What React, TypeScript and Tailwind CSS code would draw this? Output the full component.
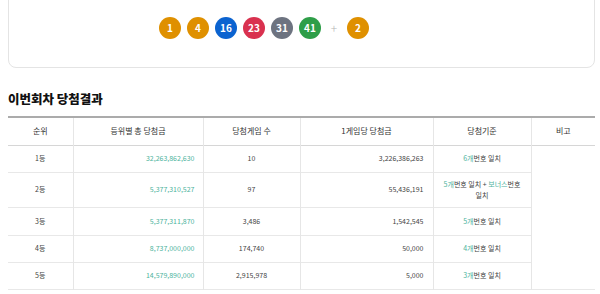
import React from 'react';

const balls = [
    { n: 1, c: 'bg-[#df9000]' },
    { n: 4, c: 'bg-[#df9000]' },
    { n: 16, c: 'bg-[#0b63d0]' },
    { n: 23, c: 'bg-[#d9314f]' },
    { n: 31, c: 'bg-[#6d7380]' },
    { n: 41, c: 'bg-[#2e9e48]' },
];

const rows = [
    { rank: '1등', total: '32,263,862,630', count: '10', per: '3,226,386,263', match: '6개', h: 'h-[27px]' },
    { rank: '2등', total: '5,377,310,527', count: '97', per: '55,436,191', match: '5개', bonus: true, h: 'h-[35px]' },
    { rank: '3등', total: '5,377,311,870', count: '3,486', per: '1,542,545', match: '5개', h: 'h-[28px]' },
    { rank: '4등', total: '8,737,000,000', count: '174,740', per: '50,000', match: '4개', h: 'h-[27px]' },
    { rank: '5등', total: '14,579,890,000', count: '2,915,978', per: '5,000', match: '3개', h: 'h-[27px]' },
];

const Ball = ({ n, c }: { n: number; c: string }) => (
    <div className={`w-[22px] h-[22px] rounded-full ${c} flex items-center justify-center text-white text-[10px] font-bold`}>
        {n}
    </div>
);

export default function App() {
    return (
        <div className="w-[600px] h-[294px] overflow-hidden bg-white pl-2 pr-[5px] font-['Noto_Sans_CJK_KR','Noto_Sans',sans-serif] text-[#444]">
            {/* winning numbers card (top cut off) */}
            <div className="-mt-[13px] h-[81px] border border-[#e4e4e4] rounded-lg flex items-center pl-[150px] gap-[6px]">
                {balls.map((b) => (
                    <Ball key={b.n} n={b.n} c={b.c} />
                ))}
                <div className="w-[14px] text-center text-[12px] font-light text-[#b5b5b5] leading-none">+</div>
                <Ball n={2} c="bg-[#df9000]" />
            </div>

            <h2 className="mt-[21px] text-[12.5px] leading-[20px] font-extrabold text-[#111]">이번회차 당첨결과</h2>

            <table className="mt-[7px] w-[587px] table-fixed border-collapse border-t-2 border-[#ababab] text-[7px]">
                <colgroup>
                    <col className="w-[65px]" />
                    <col className="w-[130px]" />
                    <col className="w-[97px]" />
                    <col className="w-[133px]" />
                    <col className="w-[98px]" />
                    <col className="w-[64px]" />
                </colgroup>
                <thead>
                    <tr className="h-[28px] border-b border-[#d6d6d6] text-[8px] text-[#333]">
                        <th className="font-normal">순위</th>
                        <th className="font-normal border-l border-[#e6e6e6]">등위별 총 당첨금</th>
                        <th className="font-normal border-l border-[#e6e6e6]">당첨게임 수</th>
                        <th className="font-normal border-l border-[#e6e6e6]">1게임당 당첨금</th>
                        <th className="font-normal border-l border-[#e6e6e6]">당첨기준</th>
                        <th className="font-normal border-l border-[#e6e6e6]">비고</th>
                    </tr>
                </thead>
                <tbody>
                    {rows.map((r, i) => (
                        <tr key={r.rank} className={`${r.h} border-b border-[#e8e8e8]`}>
                            <td className="text-center">{r.rank}</td>
                            <td className="text-right pr-2 text-[#4db39d] border-l border-[#e6e6e6]">{r.total}</td>
                            <td className="text-center border-l border-[#e6e6e6]">{r.count}</td>
                            <td className="text-right pr-[9px] border-l border-[#e6e6e6]">{r.per}</td>
                            <td className="text-center leading-[11px] border-l border-[#e6e6e6]">
                                <span className="text-[#4db39d]">{r.match}</span>번호 일치
                                {r.bonus && (
                                    <>
                                        {' + '}
                                        <span className="text-[#4db39d]">보너스</span>번호
                                        <br />
                                        일치
                                    </>
                                )}
                            </td>
                            {i === 0 && <td rowSpan={5} className="border-l border-[#e6e6e6]"></td>}
                        </tr>
                    ))}
                </tbody>
            </table>
        </div>
    );
}
